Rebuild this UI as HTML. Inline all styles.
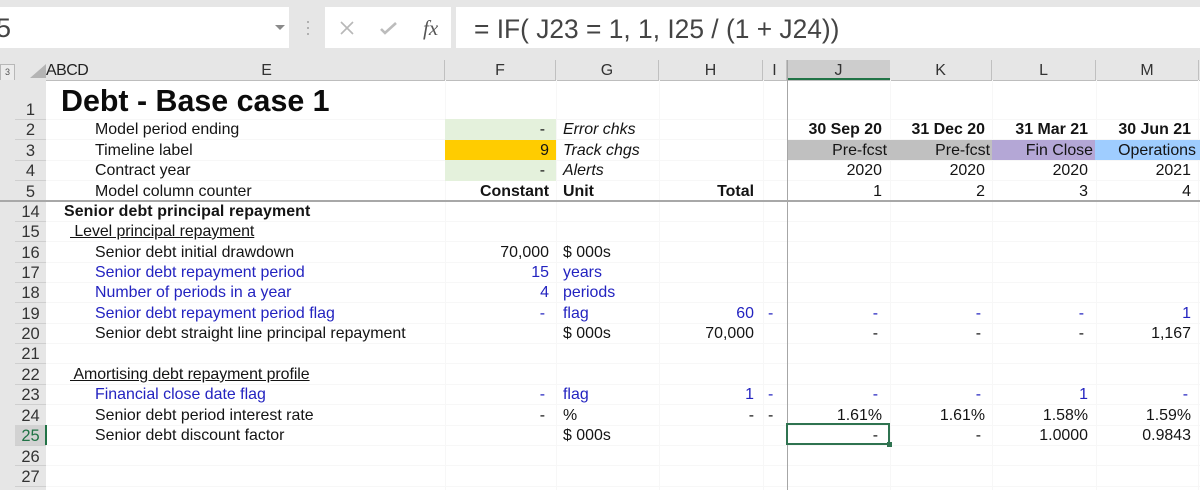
<!DOCTYPE html>
<html><head><meta charset="utf-8"><style>
html,body{margin:0;padding:0}
body{width:1200px;height:490px;overflow:hidden;background:#fff;position:relative;font-family:"Liberation Sans",Arial,sans-serif;font-size:15.93px;color:#141414;filter:blur(.3px)}
div,span.a{position:absolute}
.r{left:0;width:1200px;height:20px;line-height:20px;white-space:pre}
.r span{position:absolute;top:1px}
.n{left:15px;width:31px;text-align:center;color:#333;font-size:16.5px}
.l{left:95px}.s{left:64px;font-weight:bold;letter-spacing:.1px}.u{left:70px;text-decoration:underline;letter-spacing:-.06px}
.f{right:651px}.fd{right:655px}
.g{left:563px}.h{right:446px}.i{left:768px}
.j{right:318px}.k{right:215px}.m{right:112px}.o{right:9px}
.jd{right:322px}.kd{right:219px}.md{right:116px}.od{right:12px}
.b{color:#2323c0}.it{font-style:italic}.bo{font-weight:bold}
.hl{background:#f7f7f7;height:1px;left:46px;width:1154px}
.vl{background:#f7f7f7;width:1px;top:80px;height:410px}
.rl{background:#cfcfcf;height:1px;left:15px;width:31px}
.ch{top:60px;height:20px;line-height:22px;text-align:center;color:#333;border-right:1px solid #c0c0c0;box-sizing:border-box}
</style></head><body>
<div style="left:0;top:0;width:1200px;height:80px;background:#e6e6e6"></div>
<div style="left:0;top:7px;width:289px;height:41px;background:#fff"></div>
<div style="left:-4px;top:7px;height:41px;line-height:43px;font-size:27px;color:#444">5</div>
<div style="left:275px;top:25px;width:0;height:0;border-left:5px solid transparent;border-right:5px solid transparent;border-top:5px solid #8a8a8a"></div>
<div style="left:307px;top:21px;width:2px;height:2px;background:#b0b0b0"></div>
<div style="left:307px;top:27px;width:2px;height:2px;background:#b0b0b0"></div>
<div style="left:307px;top:33px;width:2px;height:2px;background:#b0b0b0"></div>
<div style="left:325px;top:7px;width:126px;height:41px;background:#fff"></div>
<svg style="position:absolute;left:340px;top:21px" width="60" height="14" viewBox="0 0 60 14"><path d="M1 1L13 13M13 1L1 13" stroke="#b8b8b8" stroke-width="1.6" fill="none"/><path d="M41 8L45 12L56 2" stroke="#bcbcbc" stroke-width="2.6" fill="none"/></svg>
<div style="left:423px;top:16px;line-height:24px;font-family:'Liberation Serif',serif;font-style:italic;font-size:21px;color:#555">fx</div>
<div style="left:456px;top:7px;width:744px;height:41px;background:#fff"></div>
<div style="left:474px;top:7px;height:41px;line-height:45px;font-size:27px;color:#444;white-space:pre;transform-origin:0 50%;transform:scaleX(.976)">= IF( J23 = 1, 1, I25 / (1 + J24))</div>

<div style="left:0;top:64px;width:13px;height:15px;border:1px solid #b8b8b8;background:#ececec;font-size:9px;line-height:15px;text-align:center;color:#555">3</div>
<div style="left:30px;top:64px;width:0;height:0;border-left:16px solid transparent;border-bottom:14px solid #b4b4b4"></div>
<div style="left:46px;top:60px;height:20px;line-height:22px;color:#222;letter-spacing:-.5px">ABCD</div>
<div class="ch" style="left:89px;width:356px">E</div>
<div class="ch" style="left:445px;width:111px">F</div>
<div class="ch" style="left:556px;width:103px">G</div>
<div class="ch" style="left:659px;width:104px">H</div>
<div class="ch" style="left:763px;width:24px">I</div>
<div class="ch" style="left:787px;width:103px;background:#cdcdcd;border-right:0;border-bottom:2px solid #217346">J</div>
<div class="ch" style="left:890px;width:102px">K</div>
<div class="ch" style="left:992px;width:104px">L</div>
<div class="ch" style="left:1096px;width:103px">M</div>
<div style="left:0;top:80px;width:1200px;height:1px;background:#bdbdbd"></div>

<div style="left:0;top:80px;width:46px;height:410px;background:#e6e6e6"></div>
<div style="left:46px;top:81px;width:1154px;height:409px;background:#fff"></div>
<div class="vl" style="left:445px"></div><div class="vl" style="left:556px"></div><div class="vl" style="left:659px"></div><div class="vl" style="left:763px"></div><div class="vl" style="left:890px"></div><div class="vl" style="left:992px"></div><div class="vl" style="left:1096px"></div><div class="vl" style="left:1198px"></div>
<div class="hl" style="top:119px"></div><div class="hl" style="top:139px"></div><div class="hl" style="top:160px"></div><div class="hl" style="top:180px"></div><div class="hl" style="top:221px"></div><div class="hl" style="top:241px"></div><div class="hl" style="top:262px"></div><div class="hl" style="top:282px"></div><div class="hl" style="top:302px"></div><div class="hl" style="top:323px"></div><div class="hl" style="top:343px"></div><div class="hl" style="top:363px"></div><div class="hl" style="top:384px"></div><div class="hl" style="top:404px"></div><div class="hl" style="top:425px"></div><div class="hl" style="top:445px"></div><div class="hl" style="top:465px"></div><div class="hl" style="top:486px"></div>
<div class="rl" style="top:119px"></div><div class="rl" style="top:139px"></div><div class="rl" style="top:160px"></div><div class="rl" style="top:180px"></div><div class="rl" style="top:221px"></div><div class="rl" style="top:241px"></div><div class="rl" style="top:262px"></div><div class="rl" style="top:282px"></div><div class="rl" style="top:302px"></div><div class="rl" style="top:323px"></div><div class="rl" style="top:343px"></div><div class="rl" style="top:363px"></div><div class="rl" style="top:384px"></div><div class="rl" style="top:404px"></div><div class="rl" style="top:425px"></div><div class="rl" style="top:445px"></div><div class="rl" style="top:465px"></div><div class="rl" style="top:486px"></div>

<div style="left:445px;top:119px;width:111px;height:21px;background:#e4f1dc"></div>
<div style="left:445px;top:140px;width:111px;height:20px;background:#ffcc00"></div>
<div style="left:445px;top:160px;width:111px;height:21px;background:#e4f1dc"></div>
<div style="left:787px;top:140px;width:205px;height:20px;background:#c0c0c0"></div>
<div style="left:992px;top:140px;width:103px;height:20px;background:#b4a7d6"></div>
<div style="left:1095px;top:140px;width:105px;height:20px;background:#9fcdff"></div>
<div style="left:15px;top:425px;width:31px;height:20px;background:#d2d2d2"></div>
<div style="left:45px;top:425px;width:2px;height:20px;background:#217346"></div>

<div style="left:15px;top:100px;width:31px;height:20px;line-height:20px;text-align:center;color:#333;font-size:16.5px">1</div>
<div style="left:61px;top:83px;line-height:36px;font-size:30.4px;font-weight:bold;color:#0c0c0c">Debt - Base case 1</div>

<div class="r" style="top:119px"><span class="n">2</span><span class="l">Model period ending</span><span class="fd">-</span><span class="g it">Error chks</span><span class="j bo">30 Sep 20</span><span class="k bo">31 Dec 20</span><span class="m bo">31 Mar 21</span><span class="o bo">30 Jun 21</span></div>
<div class="r" style="top:140px"><span class="n">3</span><span class="l">Timeline label</span><span class="f">9</span><span class="g it">Track chgs</span><span style="right:313px">Pre-fcst</span><span style="right:210px">Pre-fcst</span><span style="right:107px">Fin Close</span><span style="right:4px">Operations</span></div>
<div class="r" style="top:160px"><span class="n">4</span><span class="l">Contract year</span><span class="fd">-</span><span class="g it">Alerts</span><span class="j">2020</span><span class="k">2020</span><span class="m">2020</span><span class="o">2021</span></div>
<div class="r" style="top:181px"><span class="n">5</span><span class="l">Model column counter</span><span class="f bo">Constant</span><span class="g bo">Unit</span><span class="h bo">Total</span><span class="j">1</span><span class="k">2</span><span class="m">3</span><span class="o">4</span></div>
<div class="r" style="top:201px"><span class="n">14</span><span class="s">Senior debt principal repayment</span></div>
<div class="r" style="top:221px"><span class="n">15</span><span class="u"> Level principal repayment</span></div>
<div class="r" style="top:242px"><span class="n">16</span><span class="l">Senior debt initial drawdown</span><span class="f">70,000</span><span class="g">$ 000s</span></div>
<div class="r" style="top:262px"><span class="n">17</span><span class="l b">Senior debt repayment period</span><span class="f b">15</span><span class="g b">years</span></div>
<div class="r" style="top:282px"><span class="n">18</span><span class="l b">Number of periods in a year</span><span class="f b">4</span><span class="g b">periods</span></div>
<div class="r" style="top:303px"><span class="n">19</span><span class="l b">Senior debt repayment period flag</span><span class="fd b">-</span><span class="g b">flag</span><span class="h b">60</span><span class="i b">-</span><span class="jd b">-</span><span class="kd b">-</span><span class="md b">-</span><span class="o b">1</span></div>
<div class="r" style="top:323px"><span class="n">20</span><span class="l">Senior debt straight line principal repayment</span><span class="g">$ 000s</span><span class="h">70,000</span><span class="jd">-</span><span class="kd">-</span><span class="md">-</span><span class="o">1,167</span></div>
<div class="r" style="top:343px"><span class="n">21</span></div>
<div class="r" style="top:364px"><span class="n">22</span><span class="u"> Amortising debt repayment profile</span></div>
<div class="r" style="top:384px"><span class="n">23</span><span class="l b">Financial close date flag</span><span class="fd b">-</span><span class="g b">flag</span><span class="h b">1</span><span class="i b">-</span><span class="jd b">-</span><span class="kd b">-</span><span class="m b">1</span><span class="od b">-</span></div>
<div class="r" style="top:405px"><span class="n">24</span><span class="l">Senior debt period interest rate</span><span class="fd">-</span><span class="g">%</span><span class="h">-</span><span class="i">-</span><span class="j">1.61%</span><span class="k">1.61%</span><span class="m">1.58%</span><span class="o">1.59%</span></div>
<div class="r" style="top:425px"><span class="n" style="color:#217346">25</span><span class="l">Senior debt discount factor</span><span class="g">$ 000s</span><span class="jd">-</span><span class="kd">-</span><span class="m">1.0000</span><span class="o">0.9843</span></div>
<div class="r" style="top:446px"><span class="n">26</span></div>
<div class="r" style="top:466px"><span class="n">27</span></div>

<div style="left:787px;top:60px;width:1px;height:430px;background:#a6a6a6"></div>
<div style="left:0;top:200px;width:1200px;height:2px;background:#a8a8a8"></div>
<div style="left:786px;top:423px;width:104px;height:22px;box-sizing:border-box;border:2px solid #2f7350"></div>
<div style="left:887px;top:442px;width:5px;height:5px;background:#2f7350;border:0"></div>
</body></html>
